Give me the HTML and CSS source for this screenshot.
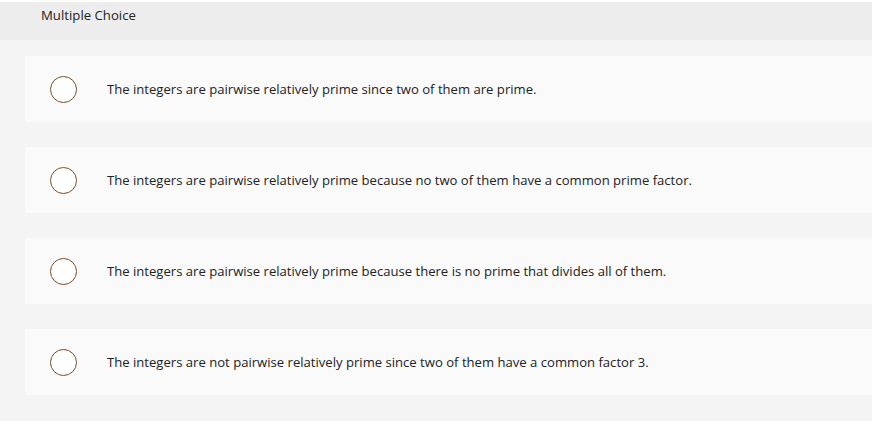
FILE: index.html
```html
<!DOCTYPE html>
<html>
<head>
<meta charset="utf-8">
<link rel="stylesheet" href="styles.css">
</head>
<body>
<div class="page">
  <div class="header">Multiple Choice</div>
  <div class="choices">
    <div class="choice"><span class="radio"></span><span class="label">The integers are pairwise relatively prime since two of them are prime.</span></div>
    <div class="choice"><span class="radio"></span><span class="label">The integers are pairwise relatively prime because no two of them have a common prime factor.</span></div>
    <div class="choice"><span class="radio"></span><span class="label">The integers are pairwise relatively prime because there is no prime that divides all of them.</span></div>
    <div class="choice"><span class="radio"></span><span class="label">The integers are not pairwise relatively prime since two of them have a common factor 3.</span></div>
  </div>
</div>
</body>
</html>
```
FILE: styles.css
```css
html, body {
  margin: 0;
  padding: 0;
  background: #ffffff;
}
body {
  font-family: "Open Sans", Lato, sans-serif;
  color: #222222;
}
.page {
  margin-top: 2px;
  background: #f4f4f4;
  height: 419px;
}
.header {
  background: #ededed;
  height: 38px;
  box-sizing: border-box;
  padding: 4px 0 0 41px;
  font-size: 13.2px;
  color: #222;
}
.choices {
  display: flex;
  flex-direction: column;
  gap: 25px;
  padding: 16px 0 0 25px;
}
.choice {
  background: #fafafa;
  height: 66px;
  border-radius: 2px 0 0 2px;
  display: flex;
  align-items: center;
  padding-left: 25px;
}
.radio {
  width: 25px;
  height: 25px;
  border: 1.5px solid #7d4a1f;
  border-radius: 50%;
  background: #ffffff;
  flex: none;
}
.label {
  margin-left: 30px;
  font-size: 13.1px;
  color: #222;
}
```
